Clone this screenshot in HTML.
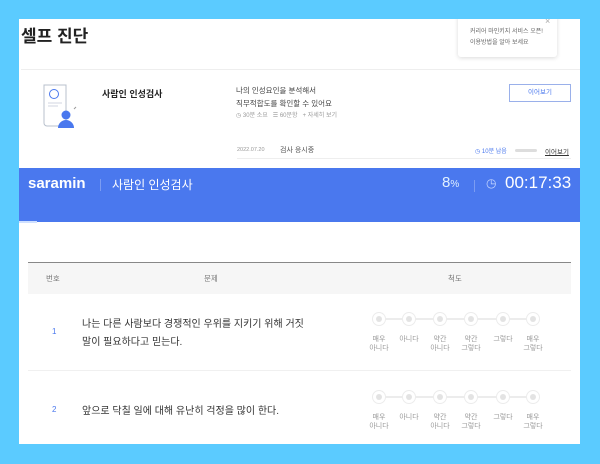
<!DOCTYPE html>
<html><head><meta charset="utf-8"><style>
*{margin:0;padding:0;box-sizing:border-box}
body{width:600px;height:464px;background:#5bcbff;position:relative;overflow:hidden;font-family:"Liberation Sans","Noto Sans CJK KR",sans-serif;color:#333}
.p{position:absolute;left:19px;top:19px;width:561px;height:425px;background:#fff;overflow:hidden}
.a{position:absolute;white-space:nowrap}
.c{position:absolute;width:14px;height:14px;border-radius:50%;border:1px solid #ececec;background:#fff}
.c:after{content:"";position:absolute;left:3px;top:3px;width:6px;height:6px;border-radius:50%;background:#e3e3e3}
.l{position:absolute;font-size:7px;color:#999;text-align:center;width:30px;line-height:9px}
</style></head><body>
<div class="p">
<div class="a" style="left:2px;top:3px;font-size:17px;font-weight:bold;color:#222">셀프 진단</div>
<div class="a" style="left:439px;top:-4px;width:99px;height:42px;background:#fff;box-shadow:0 1px 4px rgba(0,0,0,.15);border-radius:3px"></div>
<div class="a" style="left:451px;top:8px;font-size:6px;color:#666;line-height:11px">커리어 마인키지 서비스 오픈!<br>이용방법을 알아 보세요</div>
<div class="a" style="left:526px;top:-3px;font-size:9px;color:#aaa">×</div>
<div class="a" style="left:2px;top:50px;width:559px;height:1px;background:#eee"></div>
<svg class="a" style="left:21px;top:65px" width="42" height="44" viewBox="0 0 42 44"><path d="M4 1h22v38a3 3 0 0 1-3 3H7a3 3 0 0 1-3-3z" fill="none" stroke="#b8c0cc" stroke-width="1"/><circle cx="14" cy="10" r="4.5" fill="none" stroke="#4a78ee"/><path d="M8 19h14M8 22h10" stroke="#d0d6e0"/><circle cx="26" cy="31" r="4.5" fill="#4a78ee"/><path d="M18 44a8 8 0 0 1 16 0z" fill="#4a78ee"/><path d="M34 25l2-2" stroke="#999"/></svg>
<div class="a" style="left:83px;top:68px;font-size:9px;font-weight:bold;color:#222">사람인 인성검사</div>
<div class="a" style="left:217px;top:65px;font-size:7.5px;color:#444;line-height:13px">나의 인성요인을 분석해서<br>직무적합도를 확인할 수 있어요</div>
<div class="a" style="left:217px;top:91px;font-size:6px;color:#999">◷ 30분 소요 &nbsp; ☰ 60문항 &nbsp; + 자세히 보기</div>
<div class="a" style="left:490px;top:65px;width:62px;height:18px;border:1px solid #9ab0ea;font-size:6.5px;color:#4a78ee;text-align:center;line-height:16px">이어보기</div>
<div class="a" style="left:218px;top:128px;font-size:5.5px;color:#999">2022.07.20</div>
<div class="a" style="left:261px;top:126px;font-size:7px;color:#555">검사 응시중</div>
<div class="a" style="left:456px;top:127px;font-size:6px;color:#4a78ee">◷ 10분 남음</div>
<div class="a" style="left:496px;top:130px;width:22px;height:3px;background:#ddd;border-radius:2px"></div>
<div class="a" style="left:526px;top:127px;font-size:6.5px;color:#333;text-decoration:underline">이어보기</div>
<div class="a" style="left:218px;top:139px;width:334px;height:1px;background:#eee"></div>
<div class="a" style="left:0;top:149px;width:561px;height:54px;background:#4a78ee"></div>
<div class="a" style="left:0;top:202px;width:18px;height:2px;background:#cfe0ff"></div>
<div class="a" style="left:9px;top:156px;font-size:15px;font-weight:bold;color:#fff">saramin</div>
<div class="a" style="left:81px;top:160px;width:1px;height:12px;background:#7b9cf2"></div>
<div class="a" style="left:93px;top:157px;font-size:12px;color:#fff">사람인 인성검사</div>
<div class="a" style="left:423px;top:155px;font-size:15px;color:#e0f0ff">8<span style="font-size:10px">%</span></div>
<div class="a" style="left:455px;top:161px;width:1px;height:12px;background:#7b9cf2"></div>
<div class="a" style="left:467px;top:157px;font-size:12px;color:#c8d8ff">◷</div>
<div class="a" style="left:486px;top:154px;font-size:17px;color:#fff">00:17:33</div>
<div class="a" style="left:9px;top:243px;width:543px;height:32px;background:#f6f6f6;border-top:1px solid #888"></div>
<div class="a" style="left:27px;top:254px;font-size:7.5px;color:#777">번호</div>
<div class="a" style="left:185px;top:254px;font-size:7.5px;color:#777">문제</div>
<div class="a" style="left:429px;top:254px;font-size:7.5px;color:#777">척도</div>
<div class="a" style="left:33px;top:308px;font-size:8px;color:#4a78ee">1</div>
<div class="a" style="left:63px;top:297px;font-size:10px;color:#333;line-height:18px">나는 다른 사람보다 경쟁적인 우위를 지키기 위해 거짓<br>말이 필요하다고 믿는다.</div>
<div class="a" style="left:9px;top:351px;width:543px;height:1px;background:#f0f0f0"></div>
<div class="a" style="left:33px;top:386px;font-size:8px;color:#4a78ee">2</div>
<div class="a" style="left:63px;top:383px;font-size:10px;color:#333">앞으로 닥칠 일에 대해 유난히 걱정을 많이 한다.</div>
<div class="a" style="left:360px;top:299px;width:155px;height:2px;background:#ececec"></div>
<div class="a" style="left:360px;top:377px;width:155px;height:2px;background:#ececec"></div>
<div class="c" style="left:353px;top:293px"></div><div class="c" style="left:383px;top:293px"></div><div class="c" style="left:414px;top:293px"></div><div class="c" style="left:445px;top:293px"></div><div class="c" style="left:477px;top:293px"></div><div class="c" style="left:507px;top:293px"></div>
<div class="c" style="left:353px;top:371px"></div><div class="c" style="left:383px;top:371px"></div><div class="c" style="left:414px;top:371px"></div><div class="c" style="left:445px;top:371px"></div><div class="c" style="left:477px;top:371px"></div><div class="c" style="left:507px;top:371px"></div>
<div class="l" style="left:345px;top:316px">매우<br>아니다</div><div class="l" style="left:375px;top:316px">아니다</div><div class="l" style="left:406px;top:316px">약간<br>아니다</div><div class="l" style="left:437px;top:316px">약간<br>그렇다</div><div class="l" style="left:469px;top:316px">그렇다</div><div class="l" style="left:499px;top:316px">매우<br>그렇다</div>
<div class="l" style="left:345px;top:394px">매우<br>아니다</div><div class="l" style="left:375px;top:394px">아니다</div><div class="l" style="left:406px;top:394px">약간<br>아니다</div><div class="l" style="left:437px;top:394px">약간<br>그렇다</div><div class="l" style="left:469px;top:394px">그렇다</div><div class="l" style="left:499px;top:394px">매우<br>그렇다</div>
</div>
</body></html>
